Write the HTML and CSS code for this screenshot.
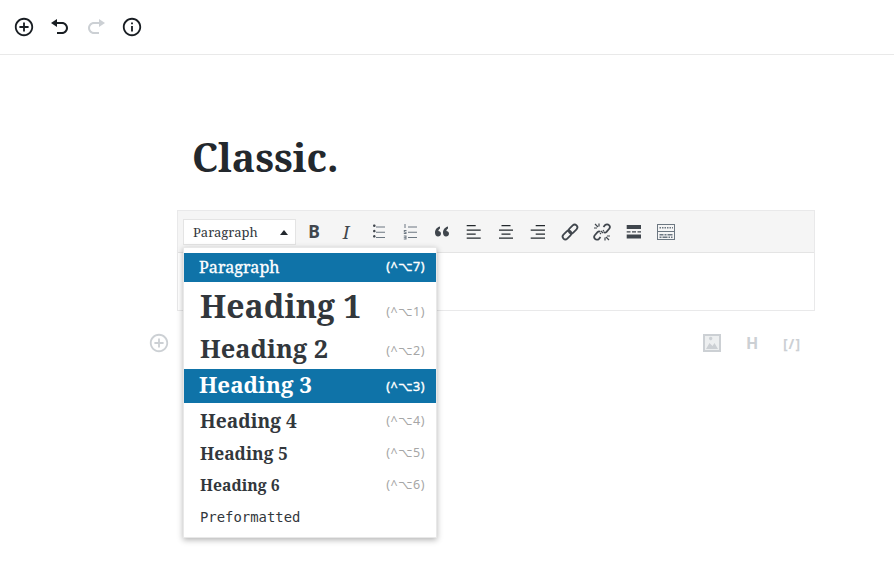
FILE: index.html
```html
<!DOCTYPE html>
<html lang="en">
<head>
<meta charset="utf-8">
<title>Classic.</title>
<link rel="stylesheet" href="styles.css">
</head>
<body>
<header class="topbar">
  <button class="top-btn"><svg class="ic-circle" viewBox="0 0 24 24"><path d="M13 7h-2v4H7v2h4v4h2v-4h4v-2h-4V7zm-1-5C6.48 2 2 6.48 2 12s4.48 10 10 10 10-4.48 10-10S17.52 2 12 2zm0 18c-4.41 0-8-3.59-8-8s3.59-8 8-8 8 3.59 8 8-3.59 8-8 8z"/></svg></button>
  <button class="top-btn"><svg class="ic-20" viewBox="0 0 20 20"><path d="M12 5H7V2L1 6l6 4V7h5c2.2 0 4 1.8 4 4s-1.8 4-4 4H7v2h5c3.3 0 6-2.7 6-6s-2.7-6-6-6z"/></svg></button>
  <button class="top-btn is-off"><svg class="ic-20" viewBox="0 0 20 20"><path d="M8 5h5V2l6 4-6 4V7H8c-2.2 0-4 1.8-4 4s1.8 4 4 4h5v2H8c-3.3 0-6-2.7-6-6s2.7-6 6-6z"/></svg></button>
  <button class="top-btn"><svg class="ic-circle" viewBox="0 0 24 24"><path d="M11 7h2v2h-2zm0 4h2v6h-2zm1-9C6.48 2 2 6.48 2 12s4.48 10 10 10 10-4.48 10-10S17.52 2 12 2zm0 18c-4.41 0-8-3.59-8-8s3.59-8 8-8 8 3.59 8 8-3.59 8-8 8z"/></svg></button>
</header>

<main class="editor">
  <h1 class="title">Classic.</h1>

  <section class="classic">
    <div class="toolbar">
      <div class="select">
        <span>Paragraph</span>
        <i class="caret"></i>
      </div>
      <span class="tool tool-b">B</span>
      <span class="tool tool-i">I</span>
      <span class="tool"><svg class="ic-20" viewBox="0 0 20 20"><path d="M5 3.700a1.300 1.300 0 1 1 0 .01zM5 9a1.300 1.300 0 1 1 0 .01zM5 14.300a1.300 1.300 0 1 1 0 .01z"/><path class="soft" d="M8 4.500h9v1H8zM8 9.800h9v1H8zM8 15h9v1H8z"/></svg></span>
      <span class="tool"><svg class="ic-20 thin" viewBox="0 0 20 20"><path d="M8 4.500h9v1H8zM8 9.800h9v1H8zM8 15h9v1H8z"/><path d="M4.500 2h1v4h-1zM3.800 8h2.700v1H4.800v.8h1.700V12H3.800v-.9h1.700v-.5H3.800zM3.800 13.500h2.700v4H3.800v-.9h1.700V16H3.800v-.7h1.700v-.9H3.800z"/></svg></span>
      <span class="tool"><svg class="ic-20" viewBox="0 0 20 20"><path d="M9 5c-2.800.6-5 3-5 6.200C4 13.600 5.300 15 7 15s3-1.200 3-2.800-1.200-2.700-2.700-2.700c.2-1 .8-1.900 1.700-2.500zM17 5c-2.800.6-5 3-5 6.200 0 2.400 1.300 3.800 3 3.800s3-1.200 3-2.800-1.200-2.700-2.700-2.700c.2-1 .8-1.900 1.700-2.500z" transform="translate(-1 -.5)"/></svg></span>
      <span class="tool"><svg class="ic-20 dark" viewBox="0 0 20 20"><path d="M2.700 3h9v1.300h-9zM2.700 7.500h14v1.300h-14zM2.700 11.500h9v1.300h-9zM2.700 15.500h14v1.300h-14z"/></svg></span>
      <span class="tool"><svg class="ic-20 dark" viewBox="0 0 20 20"><path d="M5.500 3h9v1.300h-9zM3 7.500h14v1.300H3zM5.500 11.500h9v1.300h-9zM3 15.500h14v1.300H3z"/></svg></span>
      <span class="tool"><svg class="ic-20 dark" viewBox="0 0 20 20"><path d="M7.700 3H17v1.300H7.700zM2.700 7.500H17v1.300H2.700zM7.700 11.500H17v1.300H7.700zM2.700 15.500H17v1.300H2.700z"/></svg></span>
      <span class="tool"><svg class="ic-20 line" viewBox="0 0 20 20"><rect x="10.300" y="2" width="5.400" height="10" rx="2.700" transform="rotate(45 13 7)"/><rect x="4.300" y="8" width="5.400" height="10" rx="2.700" transform="rotate(45 7 13)"/></svg></span>
      <span class="tool"><svg class="ic-20 line" viewBox="0 0 20 20"><path d="M11.500 5l1.500-1.800c1.300-1.300 3-1.100 4 0 1 1 1 2.700 0 3.800l-2.500 2.800c-.8.800-1.900 1-2.800.5M8.500 15L7 16.800c-1.300 1.300-3 1.100-4 0-1-1-1-2.700 0-3.800l2.500-2.800c.8-.8 1.900-1 2.800-.5"/><path class="sparks" d="M3 2l3 3M2 6h3M7 1.500v3M17 18l-3-3M18 14h-3M13 18.500v-3M9 9l2 2M11 8l1 1.500M8 11l1 1"/></svg></span>
      <span class="tool"><svg class="ic-20" viewBox="0 0 20 20"><path d="M2.700 3H17v4H2.700zM2.700 12.500H17v4H2.700zM2.700 9.200h3.800v1.300H2.700zM8 9.200h4v1.300H8zM13.500 9.200H17v1.300h-3.500z"/></svg></span>
      <span class="tool"><svg class="ic-20 kitchen" viewBox="0 0 20 20"><path fill-rule="evenodd" d="M1 2h18v16H1zM2 3v6h16V3zM2 10v7h16v-7z"/><path d="M3.500 5h1.500v1.500H3.500zM6 5h1.500v1.500H6zM8.500 5H10v1.500H8.500zM11 5h1.500v1.500H11zM13.500 5H15v1.500h-1.500zM16 5h1v1.500h-1zM3.500 12h4v1.500h-4zM8.500 12h2v1.500h-2zM11.500 12h5v1.500h-5zM3.500 14.500h2V16h-2zM6.500 14.500h5V16h-5zM12.500 14.500h1.500V16h-1.500zM15 14.500h1.500V16H15z"/></svg></span>
    </div>
    <div class="classic-body"></div>

    <div class="menu">
      <div class="menu-row row-p is-active"><span>Paragraph</span><kbd>(^⌥7)</kbd></div>
      <div class="menu-row row-1"><span>Heading 1</span><kbd>(^⌥1)</kbd></div>
      <div class="menu-row row-2"><span>Heading 2</span><kbd>(^⌥2)</kbd></div>
      <div class="menu-row row-3 is-active"><span>Heading 3</span><kbd>(^⌥3)</kbd></div>
      <div class="menu-row row-4"><span>Heading 4</span><kbd>(^⌥4)</kbd></div>
      <div class="menu-row row-5"><span>Heading 5</span><kbd>(^⌥5)</kbd></div>
      <div class="menu-row row-6"><span>Heading 6</span><kbd>(^⌥6)</kbd></div>
      <div class="menu-row row-pre"><span>Preformatted</span></div>
    </div>
  </section>

  <div class="inserter">
    <svg class="ic-circle plus" viewBox="0 0 24 24"><path d="M13 7h-2v4H7v2h4v4h2v-4h4v-2h-4V7zm-1-5C6.480 2 2 6.480 2 12s4.480 10 10 10 10-4.480 10-10S17.520 2 12 2zm0 18c-4.410 0-8-3.590-8-8s3.590-8 8-8 8 3.590 8 8-3.590 8-8 8z"/></svg>
    <div class="quick">
      <span class="quick-item"><svg class="ic-20" viewBox="0 0 20 20"><path fill-rule="evenodd" d="M1 1h18v18H1zM3 3v14h14V3z"/><path d="M3 3h14v14H3z" opacity=".35"/><path d="M4 16l3.500-6 3 3 2-3 3.500 6zM7 5.500a1.700 1.700 0 1 1 0 .01z"/></svg></span>
      <span class="quick-item quick-h">H</span>
      <span class="quick-item quick-code">[/]</span>
    </div>
  </div>
</main>
</body>
</html>
```
FILE: styles.css
```css
* { box-sizing: border-box; }

html, body {
  margin: 0;
  height: 100%;
  background: #fff;
  overflow: hidden;
}

body {
  font-family: "Noto Serif", "DejaVu Serif", serif;
  color: #23282d;
}

svg { display: block; fill: currentColor; }
.ic-circle { width: 22px; height: 22px; }
.ic-20 { width: 20px; height: 20px; }

.topbar {
  display: flex;
  align-items: center;
  height: 55px;
  padding-left: 5.500px;
  border-bottom: 1px solid #e9e9e9;
}

.top-btn {
  display: flex;
  align-items: center;
  justify-content: center;
  width: 36px;
  height: 36px;
  padding: 0;
  border: 0;
  background: none;
  color: #191e23;
}
.top-btn.is-off { color: #ccd0d4; }

.editor {
  width: 638px;
  margin-left: 177px;
}

.title {
  margin: 0;
  padding: 77px 0 0 15px;
  height: 155px;
  font-size: 39px;
  line-height: 50px;
  font-weight: 700;
}

.classic {
  position: relative;
  border: 1px solid #e9e9ea;
}

.toolbar {
  display: flex;
  align-items: center;
  height: 42px;
  padding: 0 0 0 5px;
  background: #f5f5f5;
  border-bottom: 1px solid #e4e4e4;
  color: #50575e;
}

.select {
  display: flex;
  align-items: center;
  justify-content: space-between;
  width: 113px;
  height: 26px;
  margin: 1px 2px 0 0;
  padding: 0 7px 0 9px;
  background: #fff;
  border: 1px solid #e4e4e4;
  font-size: 13px;
  color: #32373c;
}

.caret {
  border-left: 4px solid transparent;
  border-right: 4px solid transparent;
  border-bottom: 5px solid #23282d;
}

.tool {
  display: flex;
  align-items: center;
  justify-content: center;
  width: 32px;
  height: 28px;
  margin-top: 1px;
  font-family: "Noto Sans", sans-serif;
  font-size: 17.500px;
  line-height: 1;
  color: #40464d;
}
.tool-b { font-weight: 700; }
.tool-i { font-style: italic; font-family: "Noto Serif", serif; font-size: 18px; }
.tool .soft { fill: #6c7781; }
.tool .dark { color: #23282d; }
.tool .thin { color: #6c7781; }
.tool .line { fill: none; stroke: currentColor; stroke-width: 1.8; }
.tool .sparks { stroke-width: 1.200; }
.kitchen { color: #6c7781; }

.classic-body { height: 57px; background: #fff; }

.menu {
  position: absolute;
  top: 36px;
  left: 5px;
  width: 254px;
  height: 291px;
  padding-top: 5px;
  background: #fff;
  border: 1px solid #e8e8e8;
  box-shadow: 0 2px 6px rgba(0, 0, 0, .3);
  color: #32373c;
  z-index: 2;
}

.menu-row {
  display: flex;
  align-items: flex-start;
  justify-content: space-between;
  padding: 0 11px 0 16px;
  line-height: 1;
  font-weight: 700;
}

.menu-row kbd {
  font-family: "Noto Sans", "DejaVu Sans", sans-serif;
  font-size: 12.500px;
  font-weight: 400;
  color: #a6a6a6;
  letter-spacing: .5px;
}

.menu-row.is-active { background: #0f73a8; color: #fff; padding-left: 15px; }
.menu-row.is-active kbd { color: #fff; -webkit-text-stroke: .4px #fff; }

.row-p { height: 29px; padding-top: 6px; font-size: 16.200px; font-weight: 400; -webkit-text-stroke: .3px #fff; }
.row-1 { height: 50px; padding-top: 8px; font-size: 32px; }
.row-2 { height: 37px; padding-top: 4px; font-size: 25.400px; }
.row-3 { height: 34px; padding-top: 5px; font-size: 22.400px; }
.row-4 { height: 34px; padding-top: 8px; font-size: 19.200px; }
.row-5 { height: 31px; padding-top: 8px; font-size: 17.400px; }
.row-6 { height: 33px; padding-top: 10px; font-size: 15.800px; }
.row-pre {
  height: 30px;
  padding-top: 10px;
  font-family: "DejaVu Sans Mono", "Liberation Mono", monospace;
  font-size: 13.900px;
  font-weight: 400;
}

.row-p kbd { margin-top: 2px; }
.row-1 kbd { margin-top: 16px; }
.row-2 kbd { margin-top: 9px; }
.row-3 kbd { margin-top: 7px; }
.row-4 kbd { margin-top: 4px; }
.row-5 kbd { margin-top: 2px; }
.row-6 kbd { margin-top: 1px; }

.inserter {
  position: relative;
  display: flex;
  justify-content: flex-end;
  align-items: center;
  height: 64px;
  padding-right: 4px;
  color: #ccd0d4;
}

.plus {
  position: absolute;
  left: -29px;
  top: 21px;
}

.quick { display: flex; align-items: center; }

.quick-item {
  display: flex;
  align-items: center;
  justify-content: center;
  width: 40px;
  font-family: "Noto Sans", sans-serif;
  font-size: 16px;
  font-weight: 700;
}
.quick-code { font-size: 14px; letter-spacing: 1px; width: 32px; margin: 0 3px 0 4px; }
```
